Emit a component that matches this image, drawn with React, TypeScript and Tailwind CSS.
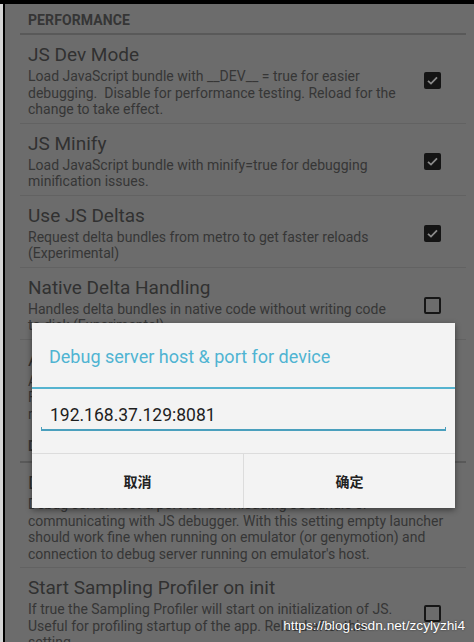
type Pref = {
  title: string;
  summary: string;
  checked?: boolean;
};

const performance: Pref[] = [
  {
    title: "JS Dev Mode",
    summary:
      "Load JavaScript bundle with __DEV__ = true for easier debugging.\u00a0 Disable for performance testing. Reload for the change to take effect.",
    checked: true,
  },
  {
    title: "JS Minify",
    summary: "Load JavaScript bundle with minify=true for debugging minification issues.",
    checked: true,
  },
  {
    title: "Use JS Deltas",
    summary: "Request delta bundles from metro to get faster reloads (Experimental)",
    checked: true,
  },
  {
    title: "Native Delta Handling",
    summary: "Handles delta bundles in native code without writing code to disk (Experimental)",
    checked: false,
  },
  {
    title: "Animations FPS Summaries",
    summary:
      "At the end of every animation, a toast will be shown with FPS information. Only works with Dev Mode enabled, and is really intended to be used with it disabled.",
    checked: false,
  },
];

const debugging: Pref[] = [
  {
    title: "Debug server host & port for device",
    summary:
      "Debug server host & port for downloading JS bundle or communicating with JS debugger. With this setting empty launcher should work fine when running on emulator (or genymotion) and connection to debug server running on emulator's host.",
  },
  {
    title: "Start Sampling Profiler on init",
    summary:
      "If true the Sampling Profiler will start on initialization of JS. Useful for profiling startup of the app. Reload after this setting.",
    checked: false,
  },
];

function CheckBox({ checked }: { checked: boolean }) {
  if (!checked) {
    return <div className="w-[17px] h-[17px] shrink-0 rounded-[2px] border-2 border-[#161616]" />;
  }
  return (
    <div className="w-[17px] h-[17px] shrink-0 rounded-[2px] bg-[#141414] flex items-center justify-center">
      <svg width="13" height="13" viewBox="0 0 13 13">
        <polyline points="2,6.8 5,9.6 11,3.4" fill="none" stroke="#8a8a8a" strokeWidth="1.8" />
      </svg>
    </div>
  );
}

function Row({ pref, last }: { pref: Pref; last?: boolean }) {
  const hasBox = pref.checked !== undefined;
  return (
    <div className={`flex items-center pl-[8px] ${hasBox ? "pr-[25px]" : "pr-[14px]"} pt-[8px] pb-[5px] ${last ? "" : "border-b border-[#626262]"}`}>
      <div className={hasBox ? "w-[371px]" : "flex-1"}>
        <div className="text-[19px] leading-[24px] text-[#313131]">{pref.title}</div>
        <div className="mt-[1px] text-[14px] leading-[16.5px] text-[#363636]">{pref.summary}</div>
      </div>
      {hasBox && (
        <div className="ml-auto mt-[1px]">
          <CheckBox checked={!!pref.checked} />
        </div>
      )}
    </div>
  );
}

function Header({ label, tall }: { label: string; tall?: boolean }) {
  return (
    <div className={`${tall ? "h-[29px] pt-[5px]" : "h-[26px] pt-[3px]"} flex items-center pl-[8px] border-b-2 border-[#595959] box-content`}>
      <span className="text-[14px] font-bold text-[#353535] tracking-[0.1px]">{label}</span>
    </div>
  );
}

function HostDialog() {
  return (
    <div className="absolute left-[32px] top-[323px] w-[423px] h-[185px] bg-[#f3f3f3] shadow-[0_2px_6px_rgba(0,0,0,0.45)] flex flex-col">
      <div className="h-[64px] flex items-center pl-[17px] pt-[2px]">
        <span className="text-[18px] text-[#4fb4d2]">Debug server host &amp; port for device</span>
      </div>
      <div className="h-[2px] bg-[#55b3cf]" />
      <div className="h-[64px] px-[9px] pt-[14px]">
        <div className="pl-[9px] text-[17.5px] leading-[24px] text-[#1e1e1e]">192.168.37.129:8081</div>
        <div className="h-[4px] border-b-2 border-x border-[#4a9fbd]" />
      </div>
      <div className="flex-1 flex border-t border-[#dcdcdc] font-['Noto_Sans_CJK_SC',sans-serif]">
        <div className="flex-1 flex items-center justify-center text-[14px] font-semibold text-[#222]">取消</div>
        <div className="w-px bg-[#dcdcdc]" />
        <div className="flex-1 flex items-center justify-center text-[14px] font-semibold text-[#222]">确定</div>
      </div>
    </div>
  );
}

export default function App() {
  return (
    <div className="relative w-[474px] h-[642px] overflow-hidden bg-[#6c6c6c] font-['Roboto',sans-serif] flex flex-col">
      <div className="h-[4px] bg-black shrink-0" />
      <div className="flex flex-1">
        <div className="w-[3px] bg-[#d4d4d4] border-r-2 border-black box-content" />
        <div className="flex-1 ml-[15px] mr-[8px]">
          <Header label="PERFORMANCE" />
          {performance.map((p, i) => (
            <Row key={p.title} pref={p} last={i === performance.length - 1} />
          ))}
          <Header label="DEBUGGING" tall />
          {debugging.map((p, i) => (
            <Row key={p.title} pref={p} last={i === debugging.length - 1} />
          ))}
        </div>
      </div>
      <HostDialog />
      <div className="absolute right-[9px] top-[616px] text-[13.7px] text-white font-['Liberation_Sans',sans-serif] [text-shadow:0_0_2px_rgba(0,0,0,0.6)]">
        https://blog.csdn.net/zcylyzhi4
      </div>
    </div>
  );
}
